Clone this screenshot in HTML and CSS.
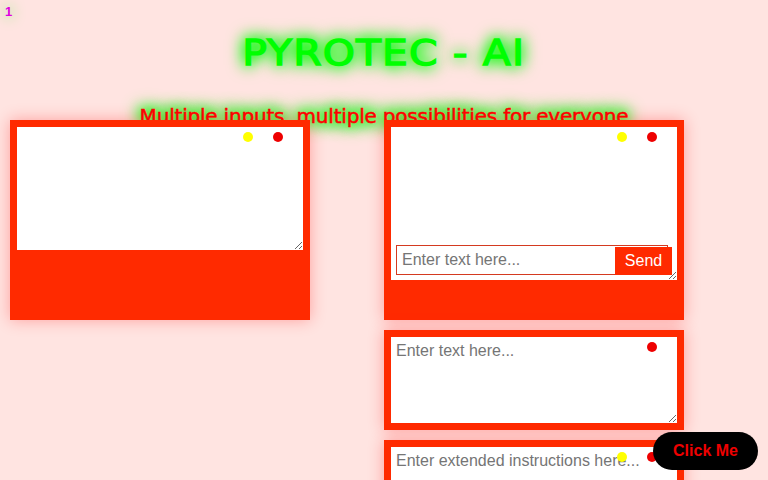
FILE: index.html
```
<!DOCTYPE html>
<html lang="en">
<head>
<meta charset="utf-8">
<title>PYROTEC - AI</title>
<link rel="stylesheet" href="styles.css">
</head>
<body>
<span class="counter">1</span>
<header class="masthead">
  <h1 class="title"><span class="title-text">PYROTEC - AI</span></h1>
  <p class="subtitle">Multiple inputs, multiple possibilities for everyone</p>
</header>
<main class="columns">
  <section class="column">
    <div class="panel panel-tall">
      <div class="field field-short">
        <textarea class="box"></textarea>
        <span class="dot dot-yellow"></span>
        <span class="dot dot-red"></span>
      </div>
    </div>
  </section>
  <section class="column">
    <div class="panel panel-tall">
      <div class="field field-mid">
        <textarea class="box"></textarea>
        <span class="dot dot-yellow"></span>
        <span class="dot dot-red"></span>
        <form class="composer">
          <input class="composer-input" type="text" placeholder="Enter text here...">
          <button class="composer-send" type="button">Send</button>
        </form>
      </div>
    </div>
    <div class="panel panel-small">
      <div class="field field-fill">
        <textarea class="box" placeholder="Enter text here..."></textarea>
        <span class="dot dot-red"></span>
      </div>
    </div>
    <div class="panel panel-large">
      <div class="field field-fill">
        <textarea class="box" placeholder="Enter extended instructions here..."></textarea>
        <span class="dot dot-yellow"></span>
        <span class="dot dot-red"></span>
      </div>
    </div>
  </section>
</main>
<button class="cta" type="button">Click Me</button>
</body>
</html>
```
FILE: styles.css
```
* { box-sizing: border-box; }
html, body { height: 480px; overflow: hidden; }
body {
  margin: 0;
  background: #ffe4e1;
  font-family: "Liberation Sans", Arial, sans-serif;
}
.counter {
  position: absolute;
  left: 5px;
  top: 4px;
  font-size: 13px;
  font-weight: 700;
  color: #e000e0;
  text-shadow: 0 0 14px #00ff00;
}
.masthead {
  height: 120px;
  text-align: center;
  font-family: "DejaVu Sans", sans-serif;
}
.title {
  margin: 0;
  padding-top: 31px;
  font-size: 36px;
  line-height: 44px;
  font-weight: 400;
  letter-spacing: 1px;
  color: #00ff00;
  -webkit-text-stroke: 1.4px #00ff00;
  text-shadow: 0 0 12px #00ff00, 0 0 14px #00ff00, 0 0 18px #00ff00;
}
.title-text {
  display: inline-block;
  transform: scaleX(1.135);
}
.subtitle {
  margin: 28px 0 0;
  font-size: 20px;
  line-height: 26px;
  height: 26px;
  letter-spacing: -0.2px;
  color: #ff0000;
  -webkit-text-stroke: 0.5px #ff0000;
  text-shadow: 0 0 12px #00ff00, 0 0 14px #00ff00, 0 0 18px #00ff00, 0 0 20px #00ff00;
}
.columns {
  display: grid;
  grid-template-columns: 300px 300px;
  column-gap: 74px;
  padding-left: 10px;
  position: relative;
}
.column {
  display: flex;
  flex-direction: column;
  gap: 10px;
}
.panel {
  background: #ff2a00;
  padding: 7px;
  box-shadow: 0 0 15px rgba(255, 0, 0, 0.3);
}
.panel-tall { height: 200px; }
.panel-small { height: 100px; }
.panel-large { height: 200px; }
.field { position: relative; }
.field-short { height: 123px; }
.field-mid { height: 153px; }
.field-fill { height: 100%; }
.box {
  display: block;
  width: 100%;
  height: 100%;
  border: 0;
  outline: 0;
  padding: 5px;
  margin: 0;
  background: #fff;
  font-family: "Liberation Sans", Arial, sans-serif;
  font-size: 16px;
}
.box::placeholder, .composer-input::placeholder { color: #757575; }
.dot {
  position: absolute;
  top: 5px;
  width: 10px;
  height: 10px;
  border-radius: 50%;
}
.dot-yellow { left: 226px; background: #ffff00; }
.dot-red { left: 256px; background: #ee0000; }
.composer {
  position: absolute;
  left: 5px;
  top: 118px;
  width: 272px;
  height: 30px;
  display: flex;
  border: 1px solid #d43a20;
  background: #fff;
}
.composer-input {
  flex: 1;
  min-width: 0;
  border: 0;
  outline: 0;
  padding: 0 5px;
  background: transparent;
  font-family: "Liberation Sans", Arial, sans-serif;
  font-size: 16px;
}
.composer-send {
  width: 57px;
  height: 28px;
  margin: 1px -5px 0 0;
  border: 0;
  padding: 0;
  background: #ff2a00;
  color: #fff;
  font-family: "Liberation Sans", Arial, sans-serif;
  font-size: 16px;
}
.cta {
  position: fixed;
  right: 10px;
  bottom: 10px;
  width: 105px;
  height: 38px;
  border: 0;
  border-radius: 19px;
  background: #000;
  color: #ee0000;
  font-family: "Liberation Sans", Arial, sans-serif;
  font-size: 16px;
  font-weight: 700;
}
```
